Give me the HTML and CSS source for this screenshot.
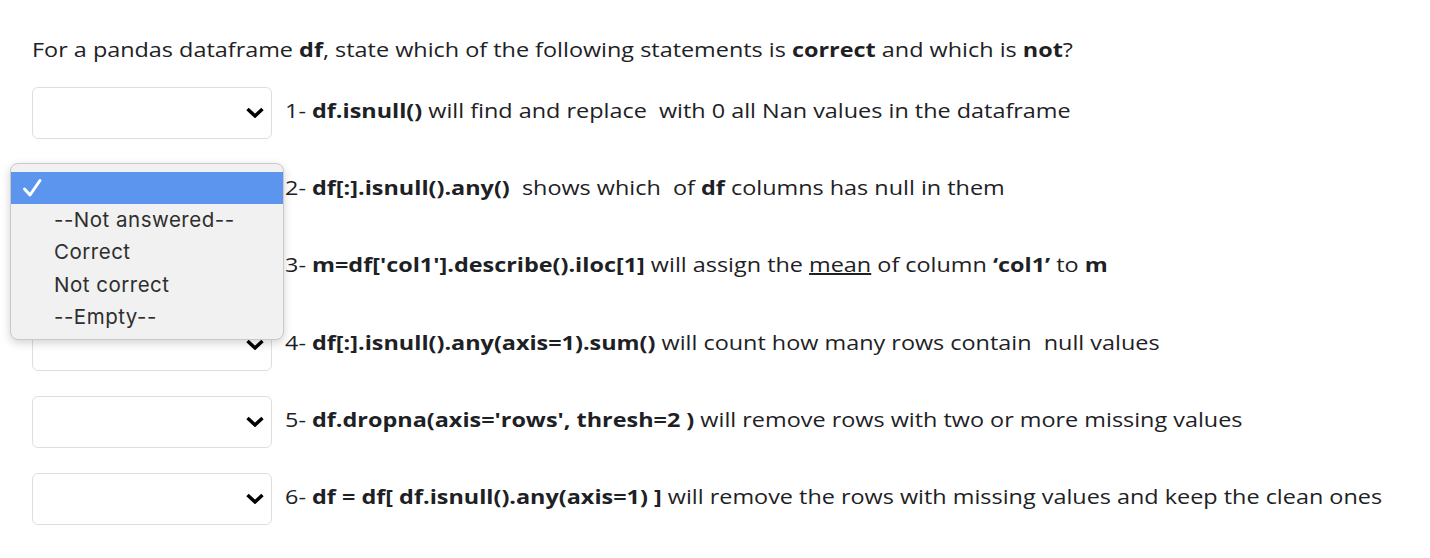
FILE: index.html
```html
<!DOCTYPE html>
<html>
<head>
<meta charset="utf-8">
<link rel="stylesheet" href="styles.css">
</head>
<body>
<div class="question">
  <p class="prompt"><span class="wide">For a pandas dataframe <b>df</b>, state which of the following statements is <b>correct</b> and which is <b>not</b>?</span></p>
  <div class="rows">
    <div class="row">
      <div class="select"><svg class="chev" viewBox="0 0 20 11" width="20" height="11"><polyline points="2.5,2 10,9 17.5,2" fill="none" stroke="#000" stroke-width="3.4"/></svg></div>
      <div class="stmt"><span class="wide">1- <b>df.isnull()</b> will find and replace&nbsp; with 0 all Nan values in the dataframe</span></div>
    </div>
    <div class="row">
      <div class="select"><svg class="chev" viewBox="0 0 20 11" width="20" height="11"><polyline points="2.5,2 10,9 17.5,2" fill="none" stroke="#000" stroke-width="3.4"/></svg></div>
      <div class="stmt"><span class="wide">2- <b>df[:].isnull().any()</b>&nbsp; shows which&nbsp; of <b>df</b> columns has null in them</span></div>
    </div>
    <div class="row">
      <div class="select"><svg class="chev" viewBox="0 0 20 11" width="20" height="11"><polyline points="2.5,2 10,9 17.5,2" fill="none" stroke="#000" stroke-width="3.4"/></svg></div>
      <div class="stmt"><span class="wide">3- <b>m=df['col1'].describe().iloc[1]</b> will assign the <u>mean</u> of column <b>‘col1’</b> to <b>m</b></span></div>
    </div>
    <div class="row">
      <div class="select"><svg class="chev" viewBox="0 0 20 11" width="20" height="11"><polyline points="2.5,2 10,9 17.5,2" fill="none" stroke="#000" stroke-width="3.4"/></svg></div>
      <div class="stmt"><span class="wide">4- <b>df[:].isnull().any(axis=1).sum()</b> will count how many rows contain&nbsp; null values</span></div>
    </div>
    <div class="row">
      <div class="select"><svg class="chev" viewBox="0 0 20 11" width="20" height="11"><polyline points="2.5,2 10,9 17.5,2" fill="none" stroke="#000" stroke-width="3.4"/></svg></div>
      <div class="stmt"><span class="wide">5- <b>df.dropna(axis='rows', thresh=2 )</b> will remove rows with two or more missing values</span></div>
    </div>
    <div class="row">
      <div class="select"><svg class="chev" viewBox="0 0 20 11" width="20" height="11"><polyline points="2.5,2 10,9 17.5,2" fill="none" stroke="#000" stroke-width="3.4"/></svg></div>
      <div class="stmt"><span class="wide">6- <b>df = df[ df.isnull().any(axis=1) ]</b> will remove the rows with missing values and keep the clean ones</span></div>
    </div>
  </div>
  <div class="menu">
    <div class="opt selected"><svg class="check" viewBox="0 0 22 22" width="22" height="22"><polyline points="3.5,12 9,18 19,3.5" fill="none" stroke="#fff" stroke-width="3" stroke-linecap="round" stroke-linejoin="round"/></svg></div>
    <div class="opt">--Not answered--</div>
    <div class="opt">Correct</div>
    <div class="opt">Not correct</div>
    <div class="opt">--Empty--</div>
  </div>
</div>
</body>
</html>
```
FILE: styles.css
```css
html, body {
  margin: 0;
  padding: 0;
  background: #fff;
}
body {
  font-family: "Open Sans", "DejaVu Sans", sans-serif;
  font-size: 20px;
  color: #1d2125;
}
.question {
  position: relative;
  padding: 34px 0 0 32px;
}
.prompt {
  margin: 0 0 21px 0;
  line-height: 32px;
}
.wide {
  display: inline-block;
  transform: scaleX(1.17);
  transform-origin: left center;
  white-space: nowrap;
}
.rows {
  display: flex;
  flex-direction: column;
  gap: 25.2px;
}
.row {
  display: flex;
  align-items: center;
  gap: 13px;
}
.select {
  box-sizing: border-box;
  width: 240px;
  height: 52px;
  border: 1px solid #dedede;
  border-radius: 6px;
  background: #fff;
  display: flex;
  align-items: center;
  justify-content: flex-end;
  padding-right: 6px;
  padding-bottom: 1px;
  flex-shrink: 0;
}
.chev {
  display: block;
}
.stmt {
  white-space: nowrap;
  line-height: 30px;
  padding-bottom: 4px;
}
.menu {
  position: absolute;
  left: 10px;
  top: 163px;
  width: 274px;
  height: 177px;
  box-sizing: border-box;
  padding-top: 8px;
  background: #f1f1f1;
  border: 1px solid #c9c9c9;
  border-radius: 8px;
  box-shadow: 0 3px 10px rgba(0,0,0,0.18);
  font-family: "Inter", "Liberation Sans", sans-serif;
  font-size: 20.5px;
  letter-spacing: 0.5px;
  color: #2e2e2e;
  overflow: hidden;
}
.opt {
  height: 32.4px;
  line-height: 32px;
  padding-left: 43px;
  white-space: nowrap;
}
.opt.selected {
  background: #5b95ee;
  height: 32px;
  padding-left: 10px;
  display: flex;
  align-items: center;
}
.check {
  display: block;
}
```
